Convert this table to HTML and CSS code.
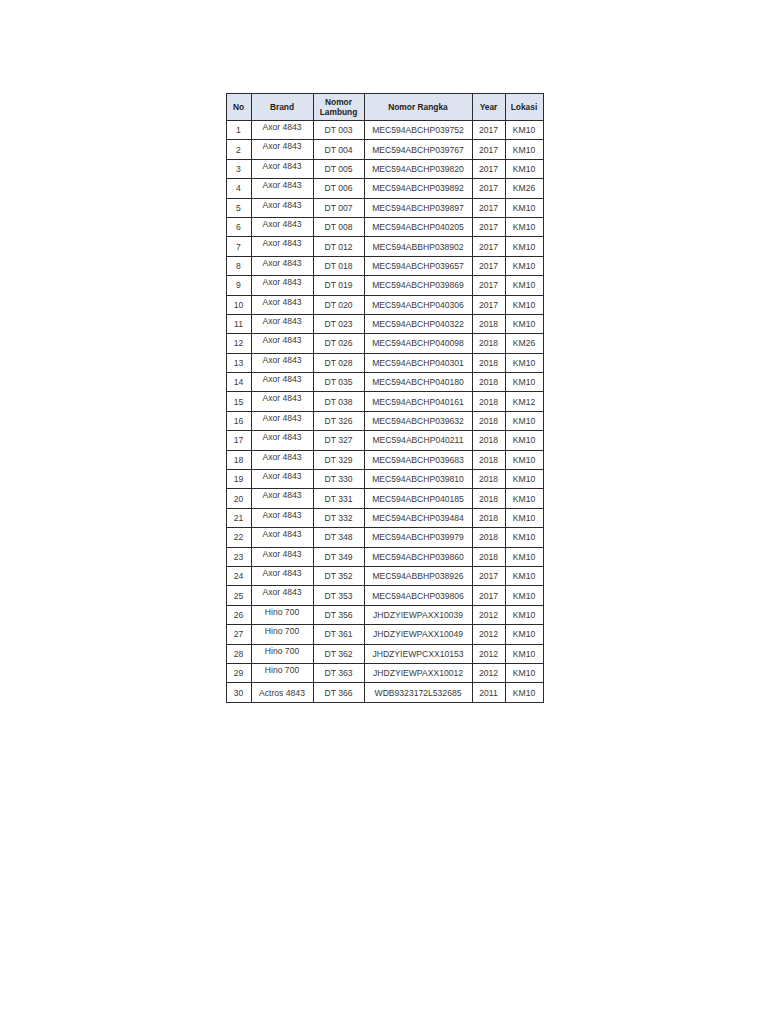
FILE: index.html
```html
<!DOCTYPE html>
<html lang="id">
<head>
<meta charset="utf-8">
<title>Daftar Unit</title>
<link rel="stylesheet" href="styles.css">
</head>
<body>
<main class="page">
<table class="units">
<colgroup>
<col class="c-no"><col class="c-brand"><col class="c-lam"><col class="c-rangka"><col class="c-year"><col class="c-lok">
</colgroup>
<thead>
<tr><th>No</th><th>Brand</th><th>Nomor<br>Lambung</th><th>Nomor Rangka</th><th>Year</th><th>Lokasi</th></tr>
</thead>
<tbody>
<tr><td>1</td><td class="up">Axor 4843</td><td>DT 003</td><td>MEC594ABCHP039752</td><td>2017</td><td>KM10</td></tr>
<tr><td>2</td><td class="up">Axor 4843</td><td>DT 004</td><td>MEC594ABCHP039767</td><td>2017</td><td>KM10</td></tr>
<tr><td>3</td><td class="up">Axor 4843</td><td>DT 005</td><td>MEC594ABCHP039820</td><td>2017</td><td>KM10</td></tr>
<tr><td>4</td><td class="up">Axor 4843</td><td>DT 006</td><td>MEC594ABCHP039892</td><td>2017</td><td>KM26</td></tr>
<tr><td>5</td><td class="up">Axor 4843</td><td>DT 007</td><td>MEC594ABCHP039897</td><td>2017</td><td>KM10</td></tr>
<tr><td>6</td><td class="up">Axor 4843</td><td>DT 008</td><td>MEC594ABCHP040205</td><td>2017</td><td>KM10</td></tr>
<tr><td>7</td><td class="up">Axor 4843</td><td>DT 012</td><td>MEC594ABBHP038902</td><td>2017</td><td>KM10</td></tr>
<tr><td>8</td><td class="up">Axor 4843</td><td>DT 018</td><td>MEC594ABCHP039657</td><td>2017</td><td>KM10</td></tr>
<tr><td>9</td><td class="up">Axor 4843</td><td>DT 019</td><td>MEC594ABCHP039869</td><td>2017</td><td>KM10</td></tr>
<tr><td>10</td><td class="up">Axor 4843</td><td>DT 020</td><td>MEC594ABCHP040306</td><td>2017</td><td>KM10</td></tr>
<tr><td>11</td><td class="up">Axor 4843</td><td>DT 023</td><td>MEC594ABCHP040322</td><td>2018</td><td>KM10</td></tr>
<tr><td>12</td><td class="up">Axor 4843</td><td>DT 026</td><td>MEC594ABCHP040098</td><td>2018</td><td>KM26</td></tr>
<tr><td>13</td><td class="up">Axor 4843</td><td>DT 028</td><td>MEC594ABCHP040301</td><td>2018</td><td>KM10</td></tr>
<tr><td>14</td><td class="up">Axor 4843</td><td>DT 035</td><td>MEC594ABCHP040180</td><td>2018</td><td>KM10</td></tr>
<tr><td>15</td><td class="up">Axor 4843</td><td>DT 038</td><td>MEC594ABCHP040161</td><td>2018</td><td>KM12</td></tr>
<tr><td>16</td><td class="up">Axor 4843</td><td>DT 326</td><td>MEC594ABCHP039632</td><td>2018</td><td>KM10</td></tr>
<tr><td>17</td><td class="up">Axor 4843</td><td>DT 327</td><td>MEC594ABCHP040211</td><td>2018</td><td>KM10</td></tr>
<tr><td>18</td><td class="up">Axor 4843</td><td>DT 329</td><td>MEC594ABCHP039683</td><td>2018</td><td>KM10</td></tr>
<tr><td>19</td><td class="up">Axor 4843</td><td>DT 330</td><td>MEC594ABCHP039810</td><td>2018</td><td>KM10</td></tr>
<tr><td>20</td><td class="up">Axor 4843</td><td>DT 331</td><td>MEC594ABCHP040185</td><td>2018</td><td>KM10</td></tr>
<tr><td>21</td><td class="up">Axor 4843</td><td>DT 332</td><td>MEC594ABCHP039484</td><td>2018</td><td>KM10</td></tr>
<tr><td>22</td><td class="up">Axor 4843</td><td>DT 348</td><td>MEC594ABCHP039979</td><td>2018</td><td>KM10</td></tr>
<tr><td>23</td><td class="up">Axor 4843</td><td>DT 349</td><td>MEC594ABCHP039860</td><td>2018</td><td>KM10</td></tr>
<tr><td>24</td><td class="up">Axor 4843</td><td>DT 352</td><td>MEC594ABBHP038926</td><td>2017</td><td>KM10</td></tr>
<tr><td>25</td><td class="up">Axor 4843</td><td>DT 353</td><td>MEC594ABCHP039806</td><td>2017</td><td>KM10</td></tr>
<tr><td>26</td><td class="up">Hino 700</td><td>DT 356</td><td>JHDZYIEWPAXX10039</td><td>2012</td><td>KM10</td></tr>
<tr><td>27</td><td class="up">Hino 700</td><td>DT 361</td><td>JHDZYIEWPAXX10049</td><td>2012</td><td>KM10</td></tr>
<tr><td>28</td><td class="up">Hino 700</td><td>DT 362</td><td>JHDZYIEWPCXX10153</td><td>2012</td><td>KM10</td></tr>
<tr><td>29</td><td class="up">Hino 700</td><td>DT 363</td><td>JHDZYIEWPAXX10012</td><td>2012</td><td>KM10</td></tr>
<tr><td>30</td><td>Actros 4843</td><td>DT 366</td><td>WDB9323172L532685</td><td>2011</td><td>KM10</td></tr>
</tbody>
</table>
</main>
</body>
</html>
```

FILE: styles.css
```css
html, body {
  margin: 0;
  padding: 0;
  background: #ffffff;
}

.page {
  padding-top: 93px;
  display: flex;
  justify-content: center;
}

.units {
  border-collapse: collapse;
  table-layout: fixed;
  width: 317px;
  font-family: "Liberation Sans", Arial, sans-serif;
  font-size: 8.6px;
  color: #3a3a3a;
  margin-left: 1px;
}

.c-no { width: 25px; }
.c-brand { width: 62px; }
.c-lam { width: 51px; }
.c-rangka { width: 108px; }
.c-year { width: 33px; }
.c-lok { width: 38px; }

.units th,
.units td {
  border: 1px solid #2b2b2b;
  padding: 0;
  text-align: center;
  vertical-align: middle;
  white-space: nowrap;
  overflow: hidden;
  line-height: 10px;
}

.units thead tr {
  height: 27px;
}

.units tbody tr {
  height: 19.4px;
}

.units th {
  background: #dde4f0;
  color: #1e1e1e;
  font-weight: bold;
  font-size: 8.4px;
}

.units td.up {
  vertical-align: top;
  padding-top: 1px;
}
```
